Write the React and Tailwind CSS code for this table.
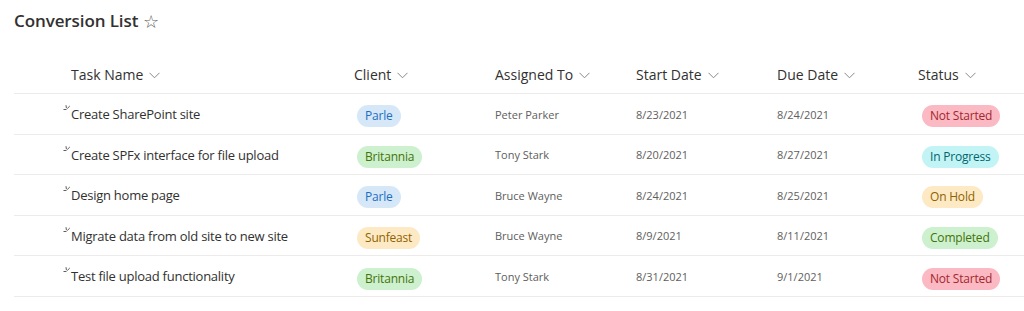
import React from 'react';

const rows = [
  { task: 'Create SharePoint site', client: 'Parle', who: 'Peter Parker', start: '8/23/2021', due: '8/24/2021', status: 'Not Started' },
  { task: 'Create SPFx interface for file upload', client: 'Britannia', who: 'Tony Stark', start: '8/20/2021', due: '8/27/2021', status: 'In Progress' },
  { task: 'Design home page', client: 'Parle', who: 'Bruce Wayne', start: '8/24/2021', due: '8/25/2021', status: 'On Hold' },
  { task: 'Migrate data from old site to new site', client: 'Sunfeast', who: 'Bruce Wayne', start: '8/9/2021', due: '8/11/2021', status: 'Completed' },
  { task: 'Test file upload functionality', client: 'Britannia', who: 'Tony Stark', start: '8/31/2021', due: '9/1/2021', status: 'Not Started' },
];

const pillColors = {
  Parle: 'bg-[#d6e8f8] text-[#1b6ec2]',
  Britannia: 'bg-[#cdf0cf] text-[#437406]',
  Sunfeast: 'bg-[#fdeac4] text-[#8f6200]',
  'Not Started': 'bg-[#fbbac3] text-[#a4262c]',
  'In Progress': 'bg-[#c2f4f6] text-[#00666d]',
  'On Hold': 'bg-[#fdeac4] text-[#8f6200]',
  Completed: 'bg-[#cdf0cf] text-[#437406]',
};

const Chevron = () => (
  <svg width="11" height="7" viewBox="0 0 11 7" className="ml-[6px] mt-[1px]">
    <path d="M0.5 0.8 L5.5 5.8 L10.5 0.8" fill="none" stroke="#8a8886" strokeWidth="1" />
  </svg>
);

// little "new item" marker in front of the title
const Sparkle = () => (
  <svg width="8" height="8" viewBox="0 0 8 8" className="absolute left-[-8px] top-[-2px]">
    <path d="M0.5 6.5 L3.5 6.5 M4.2 5.6 L6.8 3 M3.4 5.2 L3 2.2" fill="none" stroke="#605e5c" strokeWidth="1" />
  </svg>
);

const Pill = ({ label }) => (
  <span className={`inline-flex h-[22px] items-center rounded-full px-[8px] text-[12px] tracking-[-0.2px] ${pillColors[label]}`}>
    {label}
  </span>
);

const cols = 'grid grid-cols-[57px_283px_141px_141px_141px_141px_1fr]';

const Header = ({ label }) => (
  <div className="flex items-center text-[14px] text-[#323130]">
    {label}
    <Chevron />
  </div>
);

const App = () => {
  return (
    <div className="h-[311px] w-full bg-white" style={{ fontFamily: '"Open Sans", "Noto Sans", sans-serif' }}>
      <div className="flex h-[57px] items-start pl-[14px] pt-[8px]">
        <h1 className="text-[17px] font-semibold tracking-[-0.1px] text-[#323130]">Conversion List</h1>
        <span className="ml-[5px] mt-[1px] text-[18px] leading-[24px] text-[#605e5c]">☆</span>
      </div>
      <div className="ml-[14px]">
        <div className={`${cols} h-[37px] items-center border-b border-[#edebe9] pb-[1px]`}>
          <div />
          <Header label="Task Name" />
          <Header label="Client" />
          <Header label="Assigned To" />
          <Header label="Start Date" />
          <Header label="Due Date" />
          <Header label="Status" />
        </div>
        {rows.map((r, i) => (
          <div key={i} className={`${cols} h-[40.6px] items-center border-b border-[#edebe9] pt-[2px]`}>
            <div />
            <div className="text-[13px] tracking-[-0.25px] text-[#323130]">
              <span className="relative">
                <Sparkle />
                {r.task}
              </span>
            </div>
            <div className="pl-[3px]"><Pill label={r.client} /></div>
            <div className="text-[11px] text-[#605e5c]">{r.who}</div>
            <div className="text-[11px] text-[#605e5c]">{r.start}</div>
            <div className="text-[11px] text-[#605e5c]">{r.due}</div>
            <div className="pl-[4px]"><Pill label={r.status} /></div>
          </div>
        ))}
      </div>
    </div>
  );
};

export default App;
